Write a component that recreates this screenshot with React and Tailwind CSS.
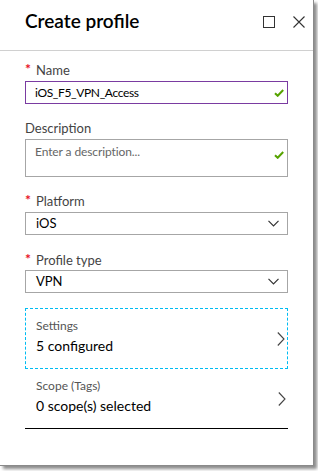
function Label({ required, children }) {
  return (
    <div className="flex items-center h-[14px] text-[13px] text-[#444] leading-none">
      {required && <span className="text-[#e81123] w-[11px] text-[14px] font-bold -mt-[2px]">*</span>}
      <span>{children}</span>
    </div>
  );
}

function CheckMark() {
  return (
    <svg width="10" height="8" viewBox="0 0 10 8" fill="none" className="shrink-0">
      <path d="M1 4.2L3.7 6.8L9.2 1" stroke="#57a300" strokeWidth="2" />
    </svg>
  );
}

function ChevronDown() {
  return (
    <svg width="11" height="7" viewBox="0 0 11 7" fill="none" className="shrink-0">
      <path d="M0.5 0.8L5.5 5.8L10.5 0.8" stroke="#333" strokeWidth="1.2" />
    </svg>
  );
}

function ChevronRight() {
  return (
    <svg width="8" height="14" viewBox="0 0 8 14" fill="none" className="shrink-0">
      <path d="M0.8 0.5L7 7L0.8 13.5" stroke="#444" strokeWidth="1.1" />
    </svg>
  );
}

function SelectBox({ value, className }) {
  return (
    <div className={`h-[23px] border border-[#a6a6a6] flex items-center justify-between pl-[10px] pr-[8px] text-[13px] text-black ${className}`}>
      <span>{value}</span>
      <ChevronDown />
    </div>
  );
}

export default function App() {
  return (
    <div className="w-[318px] h-[471px] bg-white" style={{ fontFamily: 'Lato, "Open Sans", sans-serif' }}>
      <div className="w-[314px] h-[466px] bg-white border-r border-b border-[#8a8a8a] shadow-[3px_3px_3px_rgba(0,0,0,0.45)] flex flex-col">
        {/* Header */}
        <div className="h-[51px] shrink-0 border-b border-[#d0d0d0] flex items-start justify-between pl-[25px] pr-[8px] pt-[7px]">
          <h1 className="text-[19px] font-semibold text-black leading-[28px]">Create profile</h1>
          <div className="flex items-center gap-[18px] pt-[9px]">
            <div className="w-[12px] h-[12px] border border-[#333]" />
            <svg width="12" height="12" viewBox="0 0 12 12" fill="none">
              <path d="M0.5 0.5L11.5 11.5M11.5 0.5L0.5 11.5" stroke="#333" strokeWidth="1.1" />
            </svg>
          </div>
        </div>

        {/* Form */}
        <div className="pl-[25px] pr-[25px] pt-[12px] flex flex-col">
          <Label required>Name</Label>
          <div className="mt-[4px] h-[23px] border border-[#7a3ba1] flex items-center justify-between pl-[9px] pr-[3px] text-[12px] tracking-[-0.35px] text-black">
            <span>iOS_F5_VPN_Access</span>
            <CheckMark />
          </div>

          <div className="mt-[17px]">
            <Label>Description</Label>
          </div>
          <div className="mt-[4px] h-[38px] border border-[#a6a6a6] flex items-start justify-between pl-[9px] pr-[3px] pt-[3px] text-[12px] tracking-[-0.1px] text-[#666]">
            <span>Enter a description...</span>
            <span className="mt-[8px]"><CheckMark /></span>
          </div>

          <div className="mt-[17px]">
            <Label required>Platform</Label>
          </div>
          <SelectBox value="iOS" className="mt-[4px]" />

          <div className="mt-[18px]">
            <Label required>Profile type</Label>
          </div>
          <SelectBox value="VPN" className="mt-[3px]" />

          {/* Settings */}
          <div className="mt-[15px] h-[61px] border border-dashed border-[#00bcf2] flex items-center justify-between pl-[10px] pr-[2px]">
            <div className="flex flex-col -mt-[3px]">
              <span className="text-[12px] text-[#555] leading-[16px]">Settings</span>
              <span className="text-[14px] text-black leading-[20px] mt-[2px]">5 configured</span>
            </div>
            <ChevronRight />
          </div>

          {/* Scope */}
          <div className="h-[60px] border-b border-black flex items-center justify-between pl-[11px] pr-[2px]">
            <div className="flex flex-col -mt-[3px]">
              <span className="text-[12px] text-[#555] leading-[16px]">Scope (Tags)</span>
              <span className="text-[14px] text-black leading-[20px] mt-[2px]">0 scope(s) selected</span>
            </div>
            <ChevronRight />
          </div>
        </div>
      </div>
    </div>
  );
}
